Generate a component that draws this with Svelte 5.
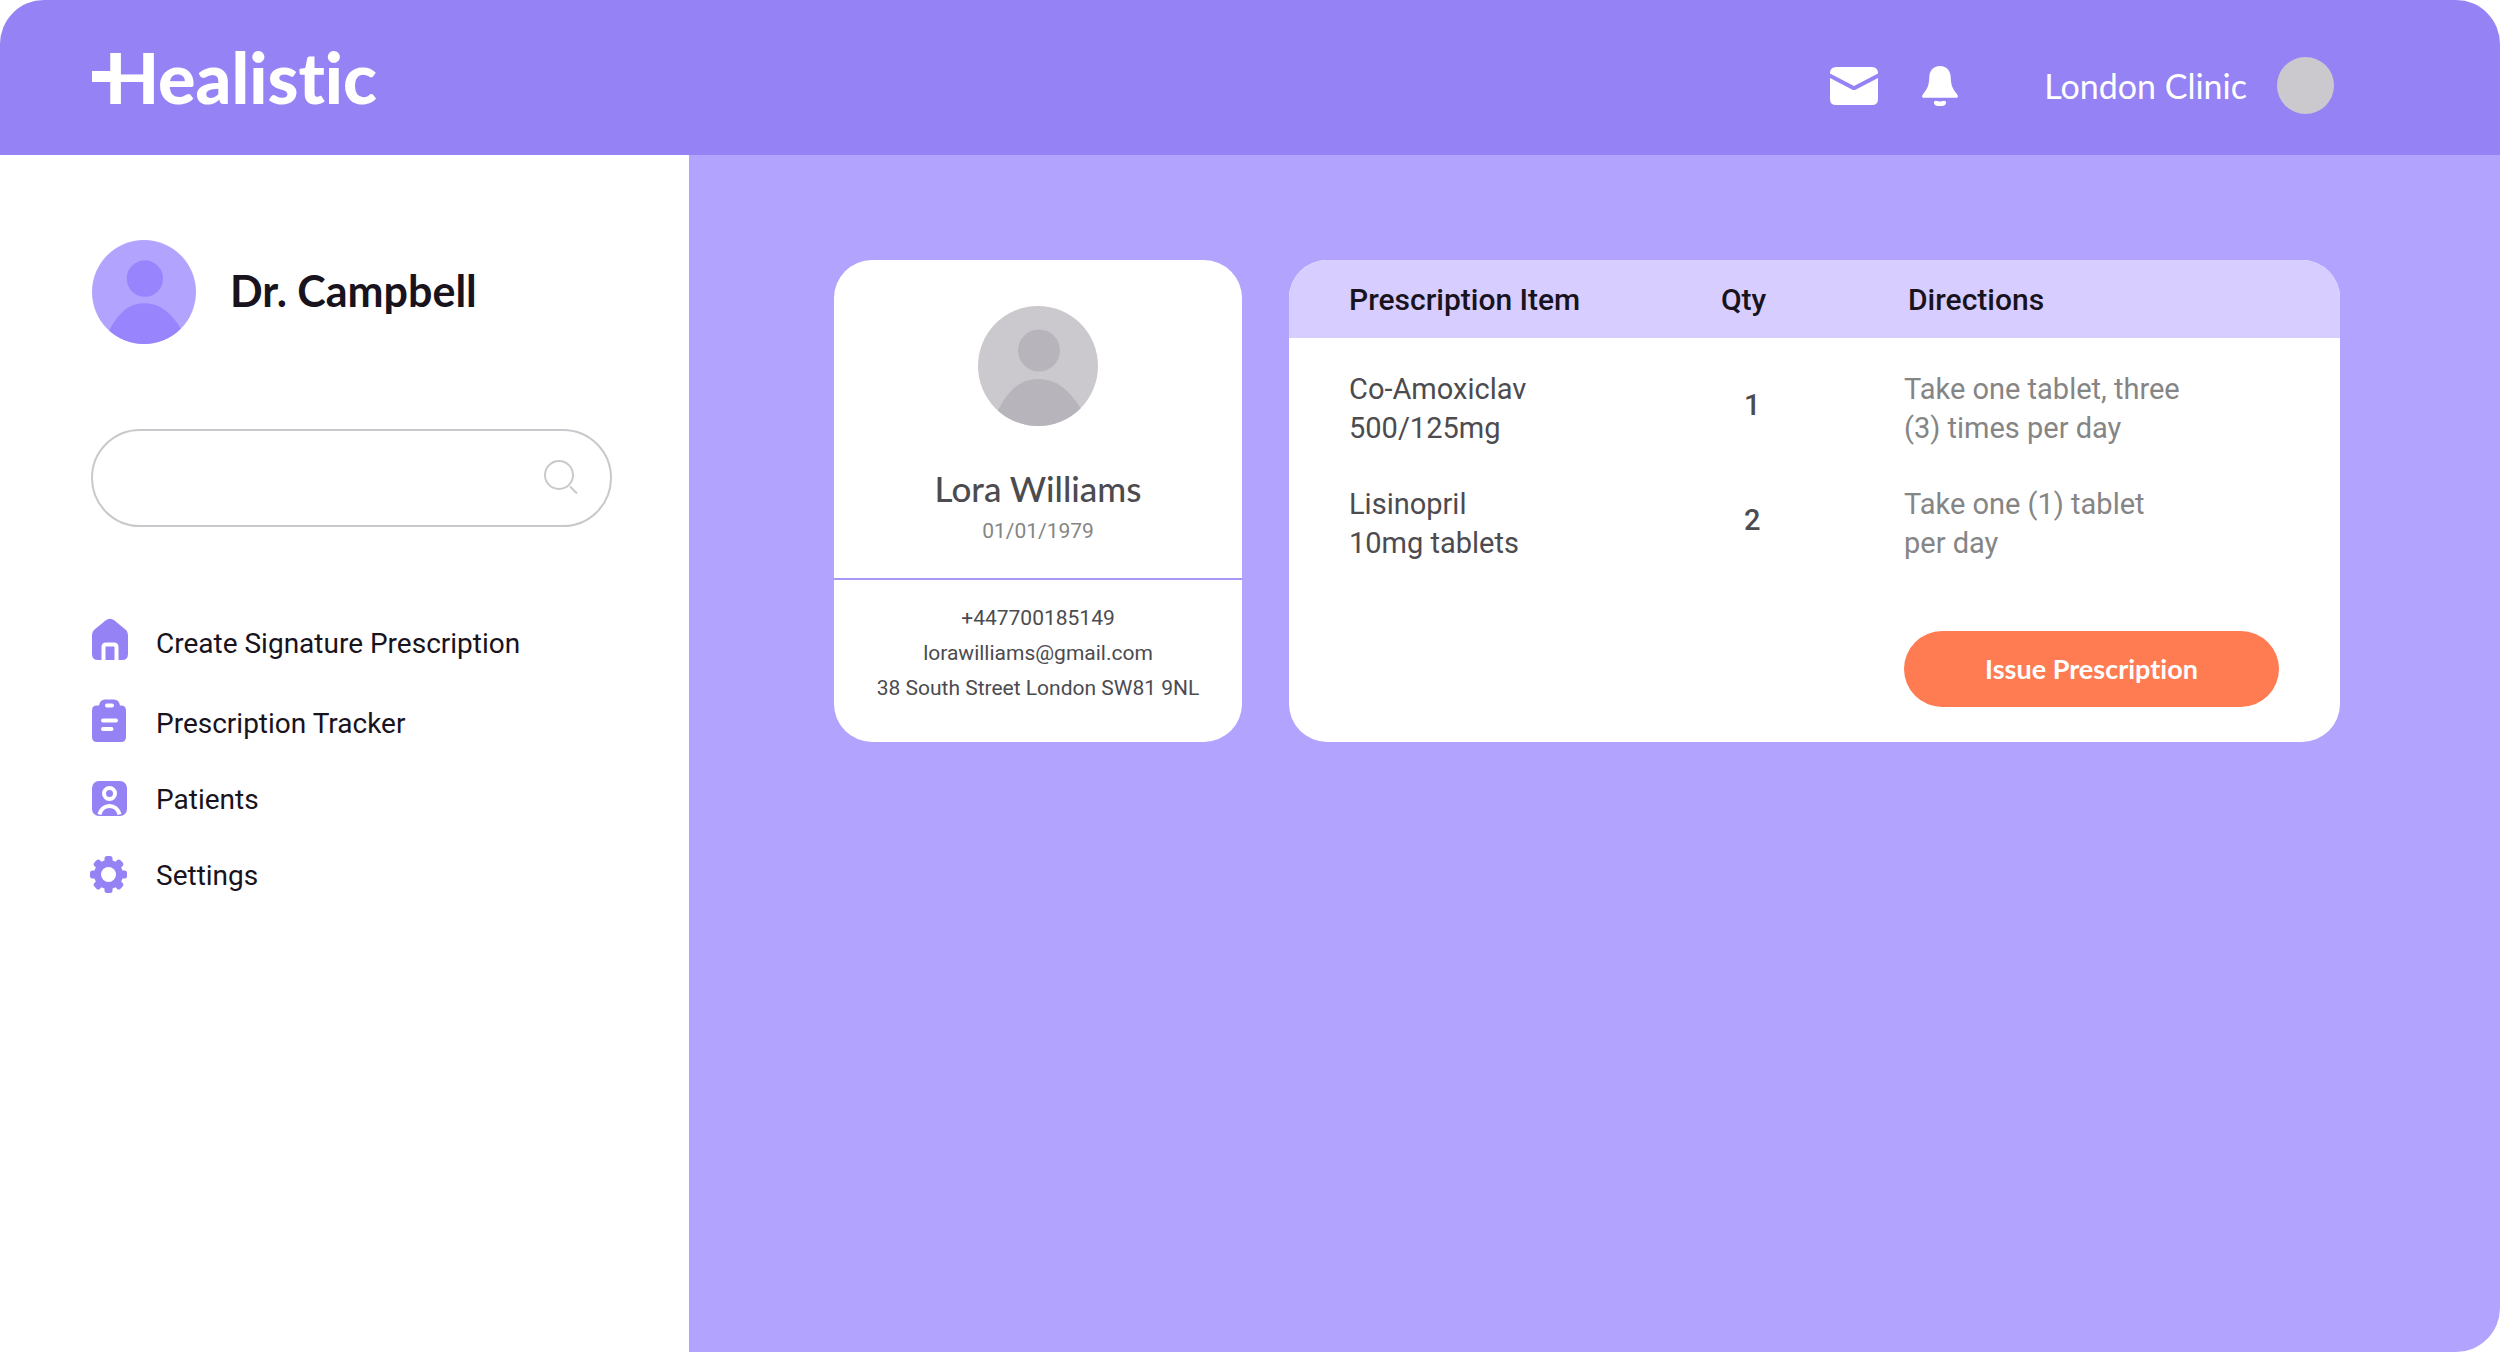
<script>
	let search = '';

	const menu = [
		{ icon: 'home', label: 'Create Signature Prescription' },
		{ icon: 'clipboard', label: 'Prescription Tracker' },
		{ icon: 'patients', label: 'Patients' },
		{ icon: 'settings', label: 'Settings' }
	];

	const patient = {
		name: 'Lora Williams',
		dob: '01/01/1979',
		phone: '+447700185149',
		email: 'lorawilliams@gmail.com',
		address: '38 South Street London SW81 9NL'
	};

	const items = [
		{ name: ['Co-Amoxiclav', '500/125mg'], qty: 1, directions: ['Take one tablet, three', '(3) times per day'] },
		{ name: ['Lisinopril', '10mg tablets'], qty: 2, directions: ['Take one (1) tablet', 'per day'] }
	];

	const teeth = [0, 45, 90, 135, 180, 225, 270, 315];
</script>

<div class="app">
	<header>
		<a class="logo" href="/"><span class="bar"></span>Healistic</a>

		<div class="account">
			<button class="icon" aria-label="Messages">
				<svg width="48" height="38" viewBox="0 0 48 38">
					<path d="M0 6.500Q0 0 6 0H42Q48 0 48 6.500L24 19Z" />
					<path d="M0 11L22 22.500Q24 23.500 26 22.500L48 11V32Q48 38 42 38H6Q0 38 0 32Z" />
				</svg>
			</button>
			<button class="icon" aria-label="Notifications">
				<svg width="36" height="40" viewBox="0 0 36 40">
					<path d="M18 0C11 0 7.500 5 7.300 11C7.100 19 5.500 22.500 1.500 27.500C-.8 30.500 0 31.800 2 31.800H34C36 31.800 36.800 30.500 34.500 27.500C30.500 22.500 28.900 19 28.700 11C28.500 5 25 0 18 0Z" />
					<path d="M14 34.800Q18 36 22 34.800C25.500 34.800 24.500 40 20 40H16C11.500 40 10.500 34.800 14 34.800Z" />
				</svg>
			</button>
			<a class="clinic" href="/clinic">London Clinic<span class="dot"></span></a>
		</div>
	</header>

	<div class="body">
		<aside>
			<div class="doctor">
				<svg class="avatar" viewBox="0 0 120 120">
					<clipPath id="doc"><circle cx="60" cy="60" r="60" /></clipPath>
					<circle class="back" cx="60" cy="60" r="60" />
					<g class="person" clip-path="url(#doc)">
						<circle cx="61" cy="44.500" r="21" />
						<path d="M17 110C30 83 43 73 60 73S92 82 107 110V120H17Z" />
					</g>
				</svg>
				<h1>Dr. Campbell</h1>
			</div>

			<label class="search">
				<input type="text" aria-label="Search" bind:value={search} />
				<svg width="34" height="34" viewBox="0 0 34 34">
					<circle cx="15" cy="14" r="14" />
					<path d="M26 25.500L33 32.500" />
				</svg>
			</label>

			<nav>
				{#each menu as item}
					<a href="/{item.icon}">
						<svg width="38" height="44" viewBox="0 0 38 44">
							{#if item.icon === 'home'}
								<path d="M2 14Q2 11 4 9L15.500 -.5Q20 -4 24.500 -.5L36 9Q38 11 38 14V33Q38 39 32 39H8Q2 39 2 33Z" />
								<path class="line butt" d="M13.500 39.500V26Q13.500 23.500 16 23.500H24Q26.500 23.500 26.500 26V39.500" />
							{:else if item.icon === 'clipboard'}
								<path d="M7 4.500H9Q10 -1.500 15 -1.500H24Q29 -1.500 30 4.500H31Q36 4.500 36 9.500V36Q36 41 31 41H7Q2 41 2 36V9.500Q2 4.500 7 4.500Z" />
								<path class="line" d="M17 4.500H22M13 19.500H26M13 28H21.500" />
							{:else if item.icon === 'patients'}
								<rect x="2" y="4" width="35" height="35" rx="7" />
								<circle class="line" cx="19.500" cy="16.500" r="5.500" />
								<path class="line butt" d="M9.500 37.500C12 26 27 26 29.500 37.500" />
							{:else}
								<circle cx="18.500" cy="21.500" r="14.500" />
								{#each teeth as angle}
									<rect x="14.500" y="3" width="8" height="9" rx="2.500" transform="rotate({angle} 18.500 21.500)" />
								{/each}
								<circle class="hole" cx="18.500" cy="21.500" r="7.500" />
							{/if}
						</svg>
						{item.label}
					</a>
				{/each}
			</nav>
		</aside>

		<main>
			<section class="card patient">
				<div class="summary">
					<svg class="avatar grey" viewBox="0 0 120 120">
						<clipPath id="pat"><circle cx="60" cy="60" r="60" /></clipPath>
						<circle class="back" cx="60" cy="60" r="60" />
						<g class="person" clip-path="url(#pat)">
							<circle cx="61" cy="44.500" r="21" />
							<path d="M17 110C30 83 43 73 60 73S92 82 107 110V120H17Z" />
						</g>
					</svg>
					<h2>{patient.name}</h2>
					<p class="dob">{patient.dob}</p>
				</div>
				<div class="contact">
					<p>{patient.phone}</p>
					<p>{patient.email}</p>
					<p>{patient.address}</p>
				</div>
			</section>

			<section class="card prescription">
				<table>
					<thead>
						<tr>
							<th class="item">Prescription Item</th>
							<th class="qty">Qty</th>
							<th class="directions">Directions</th>
						</tr>
					</thead>
					<tbody>
						{#each items as row}
							<tr>
								<td class="item">{row.name[0]}<br />{row.name[1]}</td>
								<td class="qty">{row.qty}</td>
								<td class="directions">{row.directions[0]}<br />{row.directions[1]}</td>
							</tr>
						{/each}
					</tbody>
				</table>
				<div class="actions">
					<button class="issue">Issue Prescription</button>
				</div>
			</section>
		</main>
	</div>
</div>

<style>
	:global(body) {
		margin: 0;
		background: #fff;
	}

	.app {
		display: flex;
		flex-direction: column;
		min-height: 100vh;
		border-radius: 44px;
		overflow: hidden;
		background: #fff;
		color: #18131c;
		font-family: Roboto, sans-serif;
		font-size: 29px;
		font-variant-ligatures: none;
	}

	h1,
	h2,
	p {
		margin: 0;
	}

	a {
		color: inherit;
		text-decoration: none;
	}

	button {
		border: none;
		padding: 0;
		cursor: pointer;
		font-variant-ligatures: none;
	}

	header {
		display: flex;
		align-items: center;
		justify-content: space-between;
		height: 155px;
		box-sizing: border-box;
		padding: 0 166px 0 92px;
		background: #9583f5;
		color: #fff;
		font-family: Lato, sans-serif;
	}

	.logo {
		display: flex;
		align-items: center;
		padding-bottom: 2px;
		font-size: 70px;
		font-weight: 900;
		line-height: 80px;
	}

	.bar {
		width: 24px;
		height: 11px;
		margin-right: -11px;
		background: #fff;
	}

	.account {
		display: flex;
		align-items: center;
		padding-top: 16px;
	}

	.icon {
		display: flex;
		margin-right: 44px;
		background: none;
		fill: #fff;
	}

	.clinic {
		display: flex;
		align-items: center;
		gap: 30px;
		margin-left: 42px;
		font-size: 34px;
	}

	.dot {
		width: 57px;
		height: 57px;
		border-radius: 50%;
		background: #cbc9ce;
	}

	.body {
		display: grid;
		grid-template-columns: 689fr 1811fr;
		flex: 1;
	}

	aside {
		padding: 85px 77px 0 91px;
	}

	.doctor {
		display: flex;
		align-items: center;
		gap: 34px;
		padding-left: 1px;
	}

	.doctor h1 {
		padding-bottom: 4px;
		font-family: Lato, sans-serif;
		font-size: 43px;
		font-weight: 700;
	}

	.avatar {
		display: block;
		width: 104px;
		height: 104px;
	}

	.back {
		fill: #b2a4fe;
	}

	.person {
		fill: #9885fd;
	}

	.grey .back {
		fill: #cbc9ce;
	}

	.grey .person {
		fill: #b7b4bb;
	}

	.search {
		display: flex;
		align-items: center;
		height: 98px;
		box-sizing: border-box;
		margin: 85px 0 84px;
		padding: 0 32px 0 40px;
		border: 2px solid #c9c8cc;
		border-radius: 49px;
	}

	.search input {
		flex: 1;
		min-width: 0;
		border: none;
		outline: none;
		background: none;
		font: inherit;
	}

	.search svg {
		overflow: visible;
		fill: none;
		stroke: #c9c8cc;
		stroke-width: 2;
	}

	nav {
		display: flex;
		flex-direction: column;
		gap: 32px;
		padding-top: 10px;
		font-size: 28px;
	}

	nav a {
		display: flex;
		align-items: center;
		gap: 28px;
	}

	nav a:first-child {
		margin-bottom: 4px;
	}

	nav svg {
		margin-left: -1px;
		overflow: visible;
		fill: #9583f5;
	}

	.line {
		fill: none;
		stroke: #fff;
		stroke-width: 4;
		stroke-linecap: round;
	}

	.butt {
		stroke-linecap: butt;
	}

	.hole {
		fill: #fff;
	}

	main {
		display: grid;
		grid-template-columns: 408fr 1051fr;
		gap: 47px;
		align-items: start;
		padding: 105px 160px 105px 145px;
		background: #b2a4fe;
	}

	.card {
		min-height: 482px;
		border-radius: 38px;
		overflow: hidden;
		background: #fff;
		color: #4c4b50;
	}

	.patient {
		text-align: center;
		font-size: 21px;
	}

	.summary {
		padding: 46px 0 34px;
		border-bottom: 2px solid #a898f8;
	}

	.summary .avatar {
		width: 120px;
		height: 120px;
		margin: 0 auto 40px;
	}

	.summary h2 {
		font-family: Lato, sans-serif;
		font-size: 35px;
		font-weight: 500;
		line-height: 44px;
	}

	.dob {
		padding-top: 8px;
		line-height: 26px;
		color: #858585;
	}

	.contact {
		padding-top: 21px;
		line-height: 35px;
	}

	table {
		width: 100%;
		border-collapse: collapse;
		text-align: left;
		line-height: 39px;
	}

	th {
		height: 78px;
		padding: 0;
		background: #d7ceff;
		color: #18131c;
		font-size: 30px;
		font-weight: 500;
	}

	td {
		padding: 32px 0 5px;
	}

	th.item,
	td.item {
		width: 39%;
		padding-left: 60px;
		box-sizing: border-box;
	}

	th.qty {
		padding-left: 22px;
	}

	td.qty {
		padding: 32px 0 13px 45px;
		font-weight: 500;
	}

	td.directions {
		width: 436px;
		color: #858585;
	}

	th.directions {
		padding-left: 4px;
	}

	.actions {
		display: flex;
		justify-content: flex-end;
		padding: 63px 61px 35px 0;
	}

	.issue {
		width: 375px;
		height: 76px;
		padding-bottom: 2px;
		border-radius: 38px;
		background: #ff7b52;
		color: #fff;
		font-family: Lato, sans-serif;
		font-size: 27px;
		font-weight: 700;
	}
</style>
